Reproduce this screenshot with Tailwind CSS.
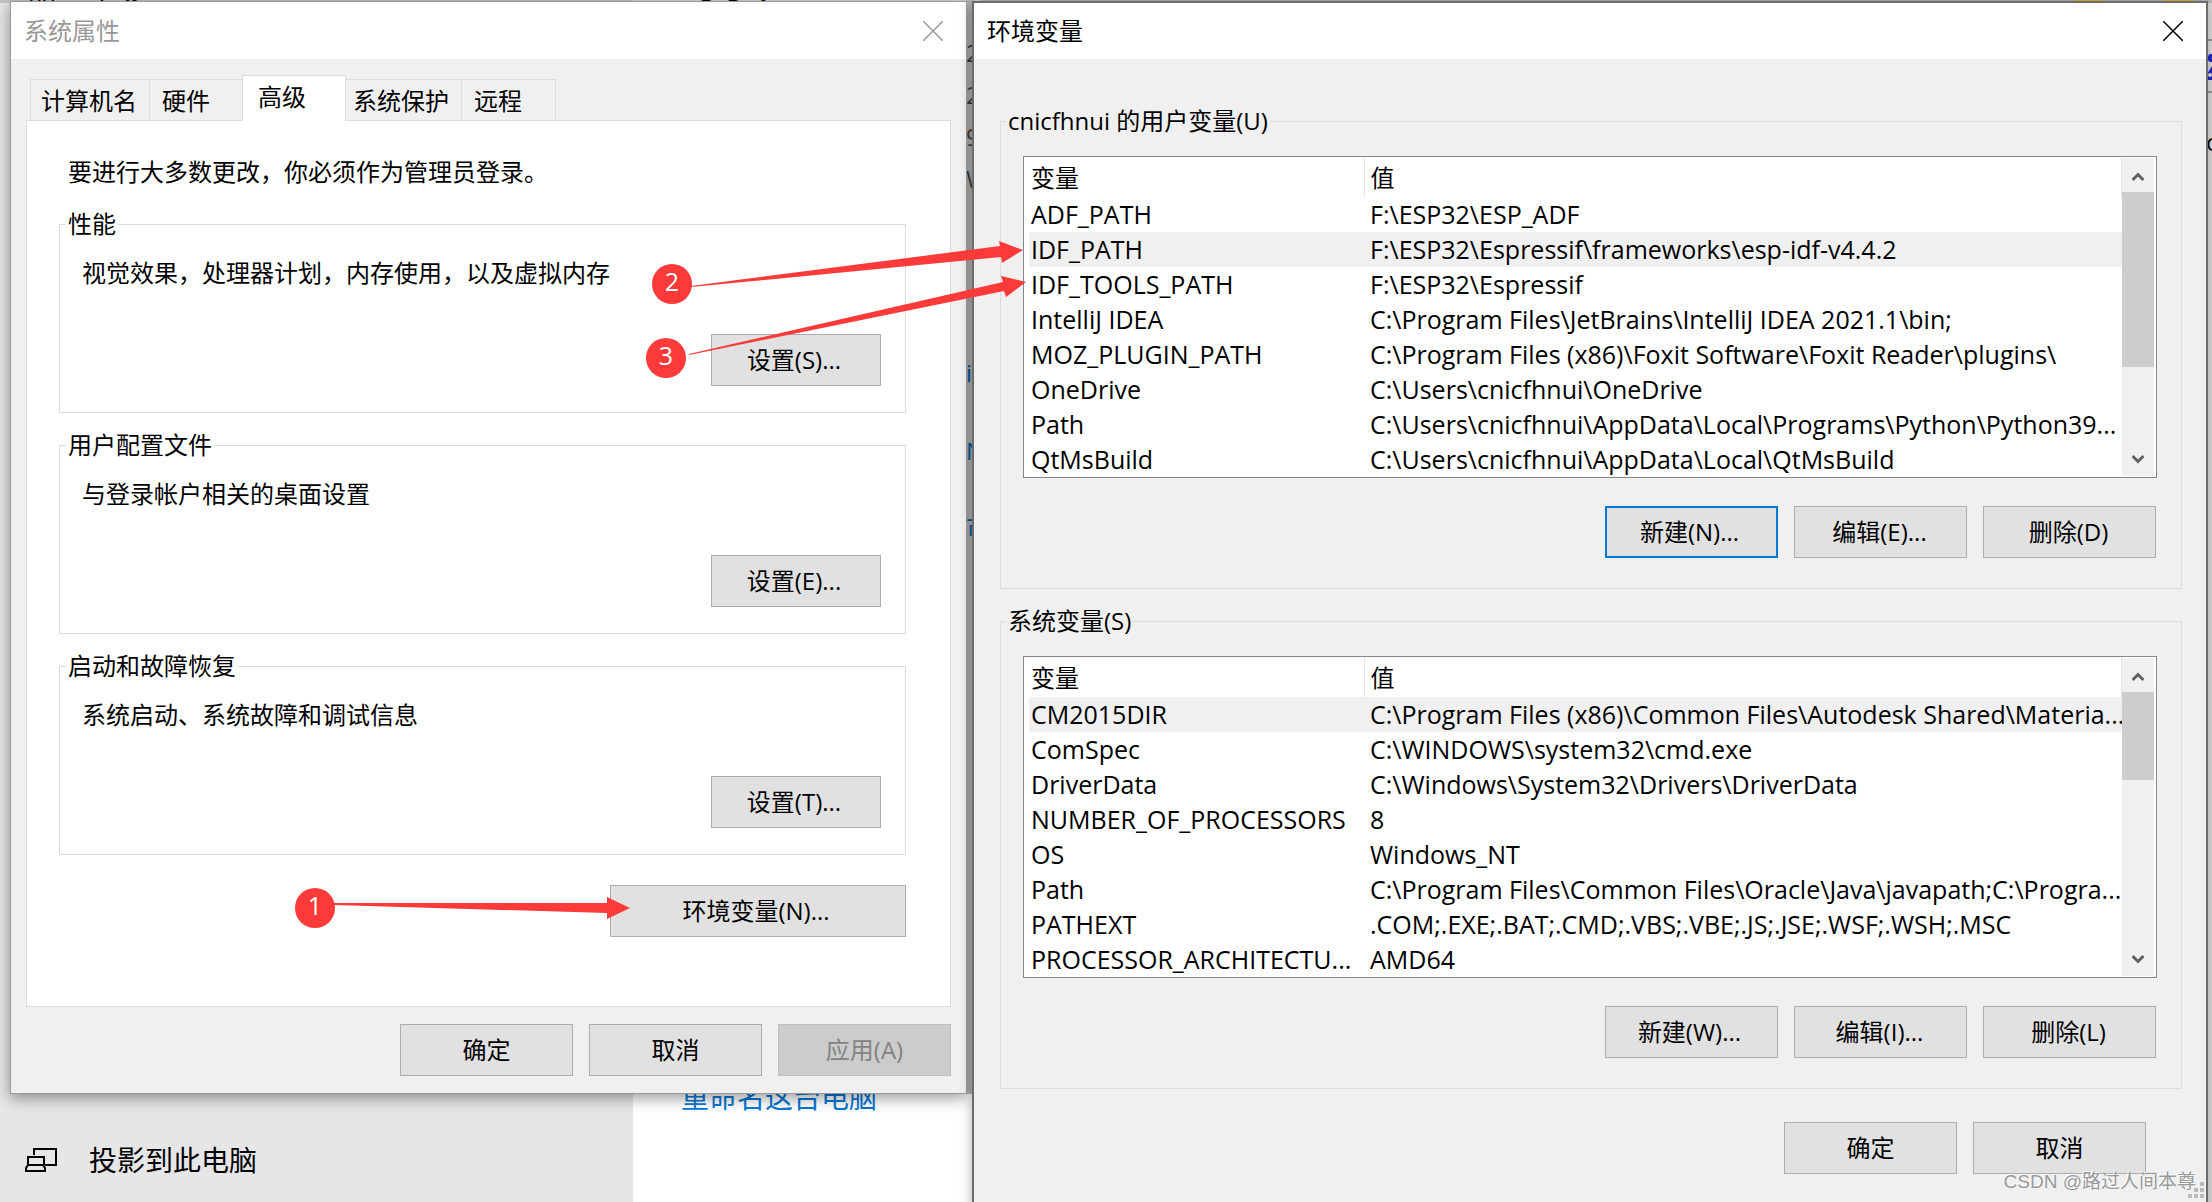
<!DOCTYPE html>
<html lang="zh-CN">
<head>
<meta charset="utf-8">
<title>环境变量</title>
<script src="https://cdn.jsdelivr.net/npm/@tailwindcss/browser@4"></script>
</head>
<body class="relative h-screen overflow-hidden bg-white font-['Open_Sans','Noto_Sans_CJK_SC',sans-serif] text-2xl text-black">

<!-- Settings app behind the dialogs -->
<div class="flex h-full">
  <nav class="flex w-[633px] shrink-0 flex-col justify-between bg-[#e6e6e6]">
    <a href="#" class="-mt-6 ml-7 flex gap-8 text-[28px] leading-8"><span>品</span><span>主页</span></a>
    <a href="#" class="mb-6 ml-[25px] flex items-center gap-8 text-[28px] leading-9">
      <svg class="h-6 w-8" viewBox="0 0 32 24" fill="none" stroke="#000" stroke-width="2"><path d="M9 7V1h22v16H20M3 17V9h16v8M3 17l-2 3v3h19v-3l-2-3z"/></svg>
      <span>投影到此电脑</span>
    </a>
  </nav>
  <main class="relative flex-1 pl-16">
    <h1 class="-mt-10 text-[44px] leading-[48px]">关于</h1>
    <a href="#" class="absolute top-[1079px] left-12 text-[28px] leading-9 text-[#0078d7]">重命名这台电脑</a>
  </main>
</div>
<div class="absolute top-0 right-0 left-[980px] h-full bg-[#e0dede]"></div>
<div class="absolute top-0 right-0 left-0 h-[3px] bg-black/15"></div>
<div class="absolute top-0 left-[1986px] flex h-[3px] items-end gap-3 overflow-hidden text-xl leading-5"><span class="w-[76px] text-[#444]">Gitee</span><span class="h-[3px] w-[30px] bg-[#e0bc50]"></span><span class="w-9 text-[#444]">ida</span><span class="h-[3px] w-[30px] bg-[#e0bc50]"></span></div>
<div class="absolute top-0 left-[966px] h-[1094px] w-2 overflow-hidden bg-[#bdbdbd] pt-8 text-[#444]">
  <p class="leading-[42px]">2</p><p class="leading-[42px]">2</p><p class="leading-[42px]">9</p><p class="leading-[42px]">W</p>
  <p class="pt-[152px] leading-[42px] text-[#0062ae]">i</p><p class="pt-[36px] leading-[42px] text-[#0062ae]">N</p><p class="pt-[36px] leading-[42px] text-[#0062ae]">可</p>
</div>
<div class="absolute top-[39px] right-0 h-[54px] w-2 border-y-2 border-[#999]"></div>
<svg class="absolute top-[54px] right-0 h-7 w-1.5" viewBox="0 0 6 28"><path d="M4 0C1 1 1 7 4 8H6V0zM0 8v8l2-2zM6 12L1 20v6h5z" fill="#2029d0"/><circle cx="4" cy="21" r="2" fill="#e0dede"/></svg>
<div class="absolute top-[126px] right-0 w-1.5 overflow-hidden leading-8"><span>o</span></div>

<!-- System properties -->
<section class="absolute top-px left-[10px] w-[957px] border border-[#9b9b9b] bg-[#f0f0f0] shadow-[0_4px_14px_rgba(0,0,0,0.4)]">
  <header class="flex h-[57px] items-center justify-between bg-white pr-[23px] pl-[13px] text-[#999]">
    <h2>系统属性</h2>
    <button type="button" aria-label="关闭"><svg class="size-5" viewBox="0 0 20 20" stroke="#999" stroke-width="1.5"><path d="M0 0L20 20M20 0L0 20"/></svg></button>
  </header>
  <div class="px-[15px] pb-[17px]">
    <div role="tablist" class="relative -mb-px flex h-[62px] items-end pl-1">
      <button type="button" role="tab" class="h-[42px] w-[120px] border border-[#dcdcdc] pt-0.5 pl-2.5 text-left">计算机名</button>
      <button type="button" role="tab" class="-ml-px h-[42px] w-[94px] border border-[#dcdcdc] pt-0.5 pl-3 text-left">硬件</button>
      <button type="button" role="tab" aria-selected="true" class="-ml-px h-[46px] w-[104px] border border-[#dcdcdc] border-b-white bg-white pb-0.5 pl-[15px] text-left">高级</button>
      <button type="button" role="tab" class="-ml-px h-[42px] w-[117px] border border-[#dcdcdc] pt-0.5 pl-[7px] text-left">系统保护</button>
      <button type="button" role="tab" class="-ml-px h-[42px] w-[95px] border border-[#dcdcdc] pt-0.5 pl-3 text-left">远程</button>
    </div>
    <div role="tabpanel" class="border border-[#dcdcdc] bg-white pt-[35px] pr-[44px] pb-[69px] pl-8">
      <p class="mb-5 ml-[9px] leading-8">要进行大多数更改，你必须作为管理员登录。</p>
      <div class="flex flex-col gap-4">
        <fieldset class="border border-[#dcdcdc] pr-6 pb-[26px] pl-[22px]">
          <legend class="-ml-4 px-0.5 leading-8">性能</legend>
          <p class="mt-[17px] leading-8">视觉效果，处理器计划，内存使用，以及虚拟内存</p>
          <button type="button" class="mt-[45px] ml-auto block h-[52px] w-[170px] border border-[#adadad] bg-[#e1e1e1] pr-1">设置(S)...</button>
        </fieldset>
        <fieldset class="border border-[#dcdcdc] pr-6 pb-[26px] pl-[22px]">
          <legend class="-ml-4 px-0.5 leading-8">用户配置文件</legend>
          <p class="mt-[17px] leading-8">与登录帐户相关的桌面设置</p>
          <button type="button" class="mt-[45px] ml-auto block h-[52px] w-[170px] border border-[#adadad] bg-[#e1e1e1] pr-1">设置(E)...</button>
        </fieldset>
        <fieldset class="border border-[#dcdcdc] pr-6 pb-[26px] pl-[22px]">
          <legend class="-ml-4 px-0.5 leading-8">启动和故障恢复</legend>
          <p class="mt-[17px] leading-8">系统启动、系统故障和调试信息</p>
          <button type="button" class="mt-[45px] ml-auto block h-[52px] w-[170px] border border-[#adadad] bg-[#e1e1e1] pr-1">设置(T)...</button>
        </fieldset>
      </div>
      <button type="button" class="mt-[30px] ml-auto block h-[52px] w-[296px] border border-[#adadad] bg-[#e1e1e1] pr-1">环境变量(N)...</button>
    </div>
    <div class="mt-[17px] flex justify-end gap-4">
      <button type="button" class="h-[52px] w-[173px] border border-[#adadad] bg-[#e1e1e1]">确定</button>
      <button type="button" class="h-[52px] w-[173px] border border-[#adadad] bg-[#e1e1e1]">取消</button>
      <button type="button" disabled class="h-[52px] w-[173px] border border-[#bfbfbf] bg-[#cccccc] text-[#838383]">应用(A)</button>
    </div>
  </div>
</section>

<!-- Environment variables -->
<section class="absolute top-px right-1 bottom-[-20px] left-[972px] border-2 border-[#6b6b6b] bg-[#f0f0f0] shadow-[0_0_12px_rgba(0,0,0,0.3)]">
  <header class="flex h-14 items-center justify-between bg-white pr-[23px] pl-[13px]">
    <h2>环境变量</h2>
    <button type="button" aria-label="关闭"><svg class="size-5" viewBox="0 0 20 20" stroke="#000" stroke-width="1.5"><path d="M0 0L20 20M20 0L0 20"/></svg></button>
  </header>
  <div class="flex flex-col gap-4 pt-[46px] pr-6 pl-[26px]">
    <fieldset class="min-w-0 border border-[#dcdcdc] pr-6 pb-[30px] pl-[22px]">
      <legend class="-ml-[17px] px-0.5 leading-8">cnicfhnui 的用户变量(U)</legend>
      <div class="mt-[19px] flex h-[322px] border border-[#828790] bg-white pr-0.5 pl-[5px]">
        <table class="w-full table-fixed text-left text-[25px] leading-[35px] whitespace-nowrap">
          <thead class="text-2xl"><tr class="h-10"><th class="w-[335px] border-r border-[#e5e5e5] pt-0.5 pl-0.5 font-normal">变量</th><th class="border-r border-[#e5e5e5] pt-0.5 pl-1.5 font-normal">值</th></tr></thead>
          <tbody>
            <tr class="h-[35px]"><td class="p-0 pl-0.5">ADF_PATH</td><td class="overflow-hidden p-0 pl-1.5">F:\ESP32\ESP_ADF</td></tr>
            <tr class="h-[35px] bg-[#f0f0f0]"><td class="p-0 pl-0.5">IDF_PATH</td><td class="overflow-hidden p-0 pl-1.5">F:\ESP32\Espressif\frameworks\esp-idf-v4.4.2</td></tr>
            <tr class="h-[35px]"><td class="p-0 pl-0.5">IDF_TOOLS_PATH</td><td class="overflow-hidden p-0 pl-1.5">F:\ESP32\Espressif</td></tr>
            <tr class="h-[35px]"><td class="p-0 pl-0.5">IntelliJ IDEA</td><td class="overflow-hidden p-0 pl-1.5">C:\Program Files\JetBrains\IntelliJ IDEA 2021.1\bin;</td></tr>
            <tr class="h-[35px]"><td class="p-0 pl-0.5">MOZ_PLUGIN_PATH</td><td class="overflow-hidden p-0 pl-1.5">C:\Program Files (x86)\Foxit Software\Foxit Reader\plugins\</td></tr>
            <tr class="h-[35px]"><td class="p-0 pl-0.5">OneDrive</td><td class="overflow-hidden p-0 pl-1.5">C:\Users\cnicfhnui\OneDrive</td></tr>
            <tr class="h-[35px]"><td class="p-0 pl-0.5">Path</td><td class="overflow-hidden p-0 pl-1.5">C:\Users\cnicfhnui\AppData\Local\Programs\Python\Python39...</td></tr>
            <tr class="h-[35px]"><td class="p-0 pl-0.5">QtMsBuild</td><td class="overflow-hidden p-0 pl-1.5">C:\Users\cnicfhnui\AppData\Local\QtMsBuild</td></tr>
          </tbody>
        </table>
        <div class="my-px flex w-8 shrink-0 flex-col bg-[#f0f0f0]">
          <button type="button" aria-label="向上滚动" class="flex h-[34px] shrink-0 items-center justify-center pt-1"><svg class="h-2.5 w-3" viewBox="0 0 12 10" fill="none" stroke="#606060" stroke-width="3"><path d="M0.5 8L6 2.5L11.5 8"/></svg></button>
          <div class="bg-[#cdcdcd]" style="height:175px"></div>
          <button type="button" aria-label="向下滚动" class="mt-auto flex h-[34px] shrink-0 items-center justify-center"><svg class="h-2.5 w-3" viewBox="0 0 12 10" fill="none" stroke="#606060" stroke-width="3"><path d="M0.5 2L6 7.5L11.5 2"/></svg></button>
        </div>
      </div>
      <div class="mt-7 flex justify-end gap-4 pr-px">
        <button type="button" class="h-[52px] w-[173px] border-2 border-[#0078d7] bg-[#e1e1e1] pr-1">新建(N)...</button>
        <button type="button" class="h-[52px] w-[173px] border border-[#adadad] bg-[#e1e1e1] pr-0.5">编辑(E)...</button>
        <button type="button" class="h-[52px] w-[173px] border border-[#adadad] bg-[#e1e1e1] pr-0.5">删除(D)</button>
      </div>
    </fieldset>
    <fieldset class="min-w-0 border border-[#dcdcdc] pr-6 pb-[30px] pl-[22px]">
      <legend class="-ml-[17px] px-0.5 leading-8">系统变量(S)</legend>
      <div class="mt-[19px] flex h-[322px] border border-[#828790] bg-white pr-0.5 pl-[5px]">
        <table class="w-full table-fixed text-left text-[25px] leading-[35px] whitespace-nowrap">
          <thead class="text-2xl"><tr class="h-10"><th class="w-[335px] border-r border-[#e5e5e5] pt-0.5 pl-0.5 font-normal">变量</th><th class="border-r border-[#e5e5e5] pt-0.5 pl-1.5 font-normal">值</th></tr></thead>
          <tbody>
            <tr class="h-[35px] bg-[#f0f0f0]"><td class="p-0 pl-0.5">CM2015DIR</td><td class="overflow-hidden p-0 pl-1.5">C:\Program Files (x86)\Common Files\Autodesk Shared\Materia...</td></tr>
            <tr class="h-[35px]"><td class="p-0 pl-0.5">ComSpec</td><td class="overflow-hidden p-0 pl-1.5">C:\WINDOWS\system32\cmd.exe</td></tr>
            <tr class="h-[35px]"><td class="p-0 pl-0.5">DriverData</td><td class="overflow-hidden p-0 pl-1.5">C:\Windows\System32\Drivers\DriverData</td></tr>
            <tr class="h-[35px]"><td class="p-0 pl-0.5">NUMBER_OF_PROCESSORS</td><td class="overflow-hidden p-0 pl-1.5">8</td></tr>
            <tr class="h-[35px]"><td class="p-0 pl-0.5">OS</td><td class="overflow-hidden p-0 pl-1.5">Windows_NT</td></tr>
            <tr class="h-[35px]"><td class="p-0 pl-0.5">Path</td><td class="overflow-hidden p-0 pl-1.5">C:\Program Files\Common Files\Oracle\Java\javapath;C:\Progra...</td></tr>
            <tr class="h-[35px]"><td class="p-0 pl-0.5">PATHEXT</td><td class="overflow-hidden p-0 pl-1.5">.COM;.EXE;.BAT;.CMD;.VBS;.VBE;.JS;.JSE;.WSF;.WSH;.MSC</td></tr>
            <tr class="h-[35px]"><td class="p-0 pl-0.5">PROCESSOR_ARCHITECTU...</td><td class="overflow-hidden p-0 pl-1.5">AMD64</td></tr>
          </tbody>
        </table>
        <div class="my-px flex w-8 shrink-0 flex-col bg-[#f0f0f0]">
          <button type="button" aria-label="向上滚动" class="flex h-[34px] shrink-0 items-center justify-center pt-1"><svg class="h-2.5 w-3" viewBox="0 0 12 10" fill="none" stroke="#606060" stroke-width="3"><path d="M0.5 8L6 2.5L11.5 8"/></svg></button>
          <div class="bg-[#cdcdcd]" style="height:88px"></div>
          <button type="button" aria-label="向下滚动" class="mt-auto flex h-[34px] shrink-0 items-center justify-center"><svg class="h-2.5 w-3" viewBox="0 0 12 10" fill="none" stroke="#606060" stroke-width="3"><path d="M0.5 2L6 7.5L11.5 2"/></svg></button>
        </div>
      </div>
      <div class="mt-7 flex justify-end gap-4 pr-px">
        <button type="button" class="h-[52px] w-[173px] border border-[#adadad] bg-[#e1e1e1] pr-1">新建(W)...</button>
        <button type="button" class="h-[52px] w-[173px] border border-[#adadad] bg-[#e1e1e1] pr-0.5">编辑(I)...</button>
        <button type="button" class="h-[52px] w-[173px] border border-[#adadad] bg-[#e1e1e1] pr-0.5">删除(L)</button>
      </div>
    </fieldset>
  </div>
  <div class="mt-[33px] flex justify-end gap-4 pr-[60px]">
    <button type="button" class="h-[52px] w-[173px] border border-[#adadad] bg-[#e1e1e1]">确定</button>
    <button type="button" class="h-[52px] w-[173px] border border-[#adadad] bg-[#e1e1e1]">取消</button>
  </div>
</section>

<!-- Resize grip and watermark -->
<svg class="absolute right-2 bottom-1 size-4" viewBox="0 0 16 16" fill="#bbb"><path d="M12 0h4v4h-4zM6 6h4v4H6zM12 6h4v4h-4zM0 12h4v4H0zM6 12h4v4H6zM12 12h4v4h-4z"/></svg>
<p class="absolute right-4 bottom-1.5 font-['Liberation_Sans','Noto_Sans_CJK_SC',sans-serif] text-[19px] leading-7 text-[#999] [text-shadow:-1px_-1px_0_#fff]">CSDN @路过人间本尊</p>

<!-- Numbered step arrows -->
<svg class="pointer-events-none absolute top-0 left-0 h-[940px] w-[1040px]" viewBox="0 0 1040 940" fill="#fc3a3a" font-size="25">
  <path d="M334 903L607 903V897L630 908L607 919V913L334 905Z"/>
  <path d="M691 286L1000 246L999 241L1023 250L1002 263L1001 257L691 287Z"/>
  <path d="M689 354L1003 282L1001 276L1026 282L1006 297L1004 291L689 355Z"/>
  <circle cx="315" cy="908" r="20"/><circle cx="672" cy="284" r="20"/><circle cx="666" cy="358" r="20"/>
  <g fill="#fff" text-anchor="middle"><text x="315" y="915">1</text><text x="672" y="291">2</text><text x="666" y="365">3</text></g>
</svg>
</body>
</html>
